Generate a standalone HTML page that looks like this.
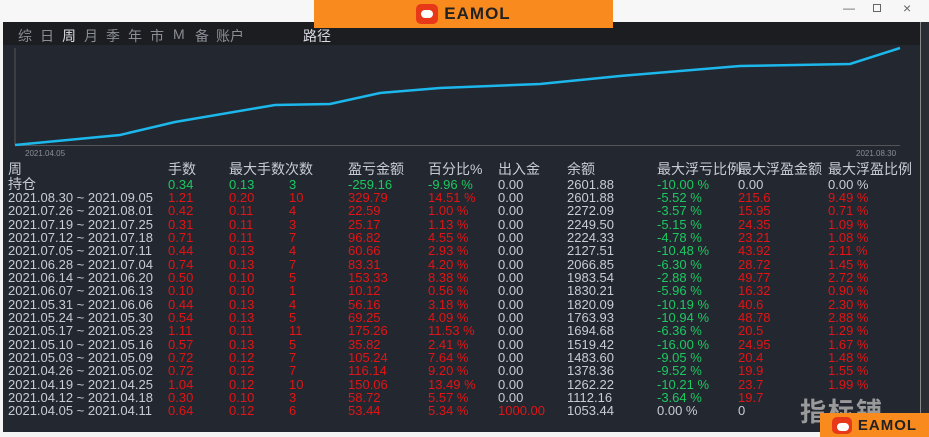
<!DOCTYPE html>
<html><head><meta charset="utf-8"><style>
*{margin:0;padding:0;box-sizing:border-box}
body{width:929px;height:437px;overflow:hidden;background:#f4f4f4;font-family:"Liberation Sans","Noto Sans CJK SC",sans-serif;position:relative}
.top{position:absolute;left:0;top:0;width:929px;height:22px;background:#f7f7f7}
.panel{position:absolute;left:3px;top:22px;width:922px;height:410px;background:#232730}
.tabs{position:absolute;left:3px;top:22px;width:922px;height:23px;background:#1c1d20;color:#8a8e96;font-size:14px}
.tabs span{position:absolute;top:4px}
.chart{position:absolute;left:3px;top:45px;width:922px;height:115px;background:#232730}
.logo{position:absolute;background:#f98a1e;display:flex;align-items:center;justify-content:center;gap:6px;font-weight:bold;color:#222;letter-spacing:1px}
.ic{width:22px;height:20px;background:#e8381a;border-radius:5px;position:relative}
.ic:after{content:"";position:absolute;left:5px;top:6px;width:12px;height:8px;background:#fff;border-radius:4px}
.r{position:absolute;left:0;height:13px;font-size:13px;line-height:13px;color:#c8ccd4;width:929px}
.r span{position:absolute;top:0}
.a{left:8px}.b{left:168px}.c{left:229px}.d{left:289px}.e{left:348px}.f{left:428px}.g{left:498px}.h{left:567px}.i{left:657px}.j{left:738px}.k{left:828px}
.R{color:#e41414}.G{color:#1cc860}
.hd{font-size:14px;color:#c8ccd4}
</style></head><body>
<div class="top"></div>
<div class="panel"></div>
<div class="tabs"><span style="left:15px">综</span><span style="left:37px">日</span><span style="left:59px;color:#d8dce2">周</span><span style="left:81px">月</span><span style="left:103px">季</span><span style="left:125px">年</span><span style="left:147px">市</span><span style="left:170px">M</span><span style="left:192px">备</span><span style="left:213px">账户</span><span style="left:300px;color:#d8dce2">路径</span></div>
<div class="chart"></div>
<div style="position:absolute;left:920px;top:22px;width:9px;height:410px;background:#2a2d33;border-left:1px solid #888"></div>
<svg style="position:absolute;left:0;top:0" width="929" height="437">
<line x1="15" y1="48" x2="15" y2="145" stroke="#555" stroke-width="1"/>
<line x1="15" y1="145.5" x2="900" y2="145.5" stroke="#555" stroke-width="1"/>
<polyline fill="none" stroke="#1cb8ec" stroke-width="2.5" points="15,145 120,135 175,122 275,105 330,104 380,93 440,88 540,84 620,76 740,66 850,64 900,48"/>
<text x="25" y="156" font-size="8" fill="#8a8e96" font-family="Liberation Sans">2021.04.05</text>
<text x="856" y="156" font-size="8" fill="#8a8e96" font-family="Liberation Sans">2021.08.30</text>
</svg>
<div class="logo" style="left:314px;top:0;width:299px;height:28px;font-size:17px"><div class="ic"></div>EAMOL</div>
<div class="r hd" style="top:163px"><span class="a">周</span><span class="b">手数</span><span class="c">最大手数次数</span><span class="e">盈亏金额</span><span class="f">百分比%</span><span class="g">出入金</span><span class="h">余额</span><span class="i">最大浮亏比例</span><span class="j">最大浮盈金额</span><span class="k">最大浮盈比例</span></div>
<div class="r" style="top:178px"><span class="a hd">持仓</span><span class="b G">0.34</span><span class="c G">0.13</span><span class="d G">3</span><span class="e G">-259.16</span><span class="f G">-9.96 %</span><span class="g">0.00</span><span class="h">2601.88</span><span class="i G">-10.00 %</span><span class="j">0.00</span><span class="k">0.00 %</span></div>
<div class="r" style="top:191px"><span class="a">2021.08.30 ~ 2021.09.05</span><span class="b R">1.21</span><span class="c R">0.20</span><span class="d R">10</span><span class="e R">329.79</span><span class="f R">14.51 %</span><span class="g">0.00</span><span class="h">2601.88</span><span class="i G">-5.52 %</span><span class="j R">215.6</span><span class="k R">9.49 %</span></div>
<div class="r" style="top:204.3px"><span class="a">2021.07.26 ~ 2021.08.01</span><span class="b R">0.42</span><span class="c R">0.11</span><span class="d R">4</span><span class="e R">22.59</span><span class="f R">1.00 %</span><span class="g">0.00</span><span class="h">2272.09</span><span class="i G">-3.57 %</span><span class="j R">15.95</span><span class="k R">0.71 %</span></div>
<div class="r" style="top:217.6px"><span class="a">2021.07.19 ~ 2021.07.25</span><span class="b R">0.31</span><span class="c R">0.11</span><span class="d R">3</span><span class="e R">25.17</span><span class="f R">1.13 %</span><span class="g">0.00</span><span class="h">2249.50</span><span class="i G">-5.15 %</span><span class="j R">24.35</span><span class="k R">1.09 %</span></div>
<div class="r" style="top:231px"><span class="a">2021.07.12 ~ 2021.07.18</span><span class="b R">0.71</span><span class="c R">0.11</span><span class="d R">7</span><span class="e R">96.82</span><span class="f R">4.55 %</span><span class="g">0.00</span><span class="h">2224.33</span><span class="i G">-4.78 %</span><span class="j R">23.21</span><span class="k R">1.08 %</span></div>
<div class="r" style="top:244.3px"><span class="a">2021.07.05 ~ 2021.07.11</span><span class="b R">0.44</span><span class="c R">0.13</span><span class="d R">4</span><span class="e R">60.66</span><span class="f R">2.93 %</span><span class="g">0.00</span><span class="h">2127.51</span><span class="i G">-10.48 %</span><span class="j R">43.92</span><span class="k R">2.11 %</span></div>
<div class="r" style="top:257.6px"><span class="a">2021.06.28 ~ 2021.07.04</span><span class="b R">0.74</span><span class="c R">0.13</span><span class="d R">7</span><span class="e R">83.31</span><span class="f R">4.20 %</span><span class="g">0.00</span><span class="h">2066.85</span><span class="i G">-6.30 %</span><span class="j R">28.72</span><span class="k R">1.45 %</span></div>
<div class="r" style="top:271px"><span class="a">2021.06.14 ~ 2021.06.20</span><span class="b R">0.50</span><span class="c R">0.10</span><span class="d R">5</span><span class="e R">153.33</span><span class="f R">8.38 %</span><span class="g">0.00</span><span class="h">1983.54</span><span class="i G">-2.88 %</span><span class="j R">49.77</span><span class="k R">2.72 %</span></div>
<div class="r" style="top:284.3px"><span class="a">2021.06.07 ~ 2021.06.13</span><span class="b R">0.10</span><span class="c R">0.10</span><span class="d R">1</span><span class="e R">10.12</span><span class="f R">0.56 %</span><span class="g">0.00</span><span class="h">1830.21</span><span class="i G">-5.96 %</span><span class="j R">16.32</span><span class="k R">0.90 %</span></div>
<div class="r" style="top:297.6px"><span class="a">2021.05.31 ~ 2021.06.06</span><span class="b R">0.44</span><span class="c R">0.13</span><span class="d R">4</span><span class="e R">56.16</span><span class="f R">3.18 %</span><span class="g">0.00</span><span class="h">1820.09</span><span class="i G">-10.19 %</span><span class="j R">40.6</span><span class="k R">2.30 %</span></div>
<div class="r" style="top:311px"><span class="a">2021.05.24 ~ 2021.05.30</span><span class="b R">0.54</span><span class="c R">0.13</span><span class="d R">5</span><span class="e R">69.25</span><span class="f R">4.09 %</span><span class="g">0.00</span><span class="h">1763.93</span><span class="i G">-10.94 %</span><span class="j R">48.78</span><span class="k R">2.88 %</span></div>
<div class="r" style="top:324.3px"><span class="a">2021.05.17 ~ 2021.05.23</span><span class="b R">1.11</span><span class="c R">0.11</span><span class="d R">11</span><span class="e R">175.26</span><span class="f R">11.53 %</span><span class="g">0.00</span><span class="h">1694.68</span><span class="i G">-6.36 %</span><span class="j R">20.5</span><span class="k R">1.29 %</span></div>
<div class="r" style="top:337.6px"><span class="a">2021.05.10 ~ 2021.05.16</span><span class="b R">0.57</span><span class="c R">0.13</span><span class="d R">5</span><span class="e R">35.82</span><span class="f R">2.41 %</span><span class="g">0.00</span><span class="h">1519.42</span><span class="i G">-16.00 %</span><span class="j R">24.95</span><span class="k R">1.67 %</span></div>
<div class="r" style="top:351px"><span class="a">2021.05.03 ~ 2021.05.09</span><span class="b R">0.72</span><span class="c R">0.12</span><span class="d R">7</span><span class="e R">105.24</span><span class="f R">7.64 %</span><span class="g">0.00</span><span class="h">1483.60</span><span class="i G">-9.05 %</span><span class="j R">20.4</span><span class="k R">1.48 %</span></div>
<div class="r" style="top:364.3px"><span class="a">2021.04.26 ~ 2021.05.02</span><span class="b R">0.72</span><span class="c R">0.12</span><span class="d R">7</span><span class="e R">116.14</span><span class="f R">9.20 %</span><span class="g">0.00</span><span class="h">1378.36</span><span class="i G">-9.52 %</span><span class="j R">19.9</span><span class="k R">1.55 %</span></div>
<div class="r" style="top:377.6px"><span class="a">2021.04.19 ~ 2021.04.25</span><span class="b R">1.04</span><span class="c R">0.12</span><span class="d R">10</span><span class="e R">150.06</span><span class="f R">13.49 %</span><span class="g">0.00</span><span class="h">1262.22</span><span class="i G">-10.21 %</span><span class="j R">23.7</span><span class="k R">1.99 %</span></div>
<div class="r" style="top:391px"><span class="a">2021.04.12 ~ 2021.04.18</span><span class="b R">0.30</span><span class="c R">0.10</span><span class="d R">3</span><span class="e R">58.72</span><span class="f R">5.57 %</span><span class="g">0.00</span><span class="h">1112.16</span><span class="i G">-3.64 %</span><span class="j R">19.7</span></div>
<div class="r" style="top:404.3px"><span class="a">2021.04.05 ~ 2021.04.11</span><span class="b R">0.64</span><span class="c R">0.12</span><span class="d R">6</span><span class="e R">53.44</span><span class="f R">5.34 %</span><span class="g R">1000.00</span><span class="h">1053.44</span><span class="i">0.00 %</span><span class="j">0</span></div>
<div style="position:absolute;left:0;top:432px;width:929px;height:5px;background:#f4f4f4"></div>
<div style="position:absolute;left:800px;top:392px;font-size:26px;font-weight:bold;color:#9a9a9a;letter-spacing:2px">指标铺</div>
<div class="logo" style="left:820px;top:413px;width:109px;height:24px;font-size:15px"><div class="ic" style="width:20px;height:17px"></div>EAMOL</div>
<div style="position:absolute;left:843px;top:1px;font-size:12px;color:#666">—</div>
<div style="position:absolute;left:873px;top:4px;width:8px;height:8px;border:1px solid #666"></div>
<div style="position:absolute;left:903px;top:0px;font-size:14px;color:#666">×</div>
</body></html>
